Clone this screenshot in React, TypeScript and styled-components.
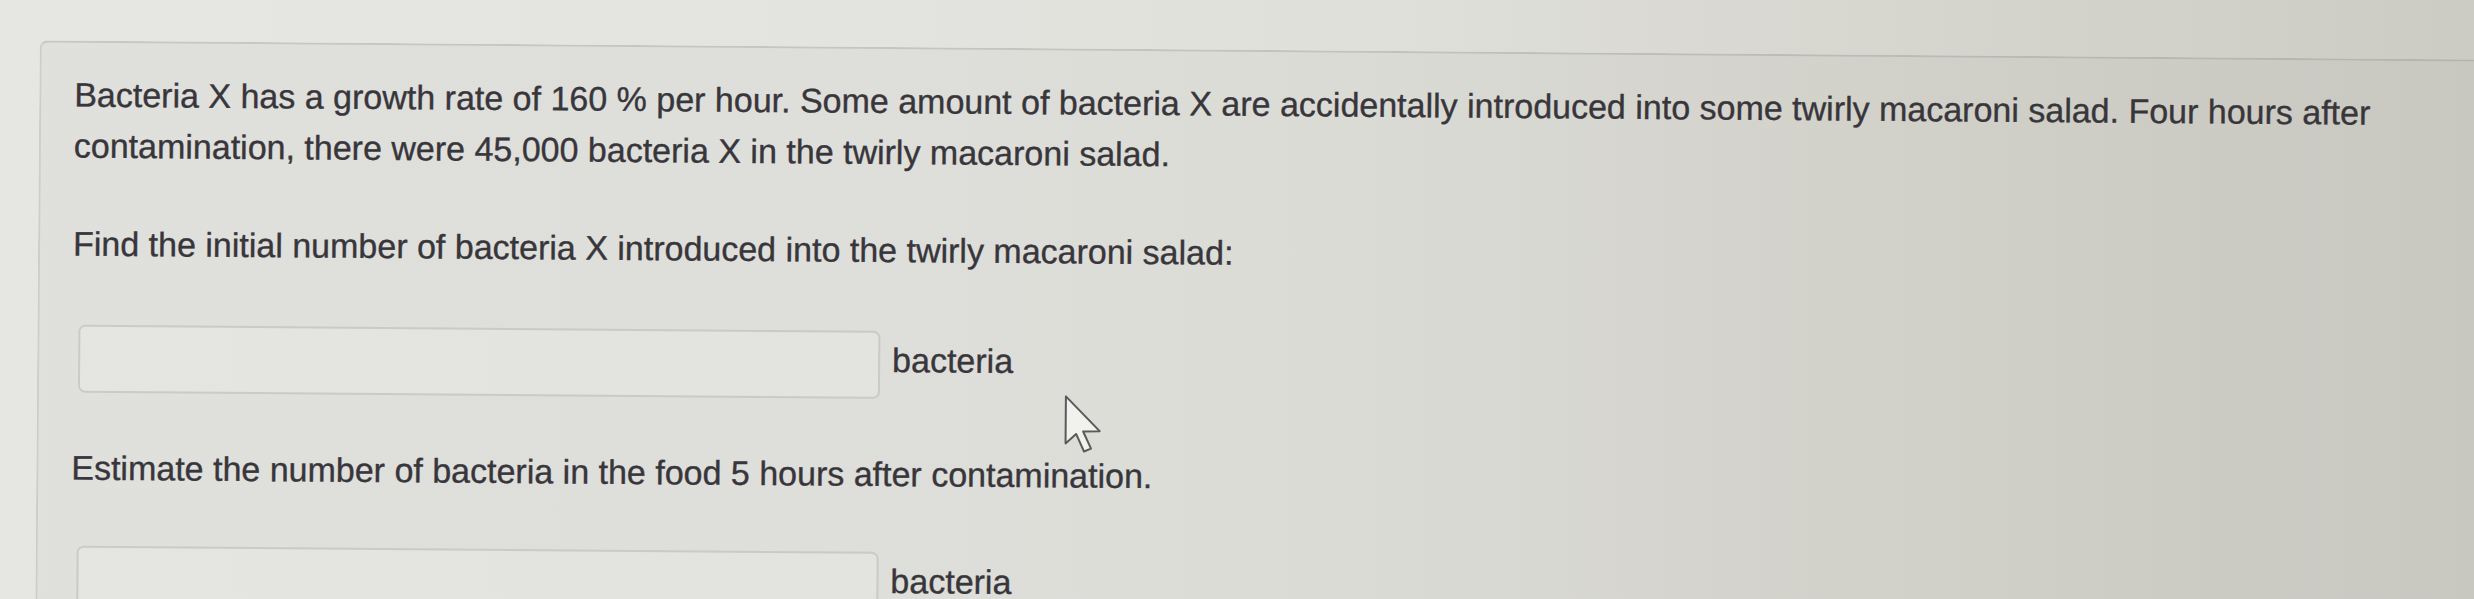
import React from 'react';
import styled, { createGlobalStyle } from 'styled-components';

const GlobalStyle = createGlobalStyle`
  html,
  body {
    margin: 0;
    padding: 0;
  }

  body {
    overflow: hidden;
    font-family: 'Liberation Sans', Arial, sans-serif;
    background: linear-gradient(
      to right,
      #e6e6e2 0%,
      #e3e3df 35%,
      #e0e0db 55%,
      #d7d6cf 75%,
      #cdccc4 100%
    );
  }
`;

// the photo is taken a little askew, so the whole sheet leans slightly
const Page = styled.div`
  position: relative;
  padding: 40px 0 0 40px;
  min-height: 700px;
  transform: rotate(0.45deg);
  transform-origin: 0 0;
`;

const Panel = styled.section`
  width: 2520px;
  box-sizing: border-box;
  padding: 27px 0 40px 33px;
  border-top: 2px solid rgba(110, 110, 104, 0.22);
  border-left: 2px solid rgba(110, 110, 104, 0.16);
  border-top-left-radius: 8px;
  background: rgba(90, 90, 80, 0.035);
`;

const Question = styled.div`
  max-width: 2360px;
`;

const Text = styled.p`
  margin: 0 0 47px;
  font-size: 34px;
  line-height: 51px;
  color: #38363b;
  -webkit-text-stroke: 0.35px #38363b;
`;

const AnswerRow = styled.div<{ top: number }>`
  display: flex;
  align-items: center;
  gap: 12px;
  margin: ${({ top }) => top}px 0 50px 6px;
`;

const AnswerBox = styled.input`
  width: 802px;
  height: 68px;
  box-sizing: border-box;
  border: 2px solid rgba(100, 100, 95, 0.2);
  border-radius: 7px;
  background: rgba(255, 255, 255, 0.16);
  outline: none;
  font-family: inherit;
  font-size: 30px;
`;

const Unit = styled.span`
  margin-bottom: 9px;
  font-size: 34px;
  line-height: 51px;
  color: #38363b;
  -webkit-text-stroke: 0.35px #38363b;
`;

const Pointer = styled.svg`
  position: absolute;
  left: 1067px;
  top: 386px;
  width: 40px;
  height: 60px;
`;

const App: React.FC = () => {
  return (
    <>
      <GlobalStyle />
      <Page>
        <Panel>
          <Question>
            <Text>
              Bacteria X has a growth rate of 160 % per hour. Some amount of bacteria X are accidentally
              introduced into some twirly macaroni salad. Four hours after contamination, there were 45,000
              bacteria X in the twirly macaroni salad.
            </Text>
            <Text>Find the initial number of bacteria X introduced into the twirly macaroni salad:</Text>
            <AnswerRow top={55}>
              <AnswerBox type="text" aria-label="initial number of bacteria" />
              <Unit>bacteria</Unit>
            </AnswerRow>
            <Text>Estimate the number of bacteria in the food 5 hours after contamination.</Text>
            <AnswerRow top={52}>
              <AnswerBox type="text" aria-label="bacteria after 5 hours" />
              <Unit>bacteria</Unit>
            </AnswerRow>
          </Question>
        </Panel>
        <Pointer viewBox="0 0 40 60">
          <path
            d="M2 2 L2 49 L12.5 39.5 L20.5 57 L27.5 54 L19.5 37 L36 36.5 Z"
            fill="#f1f1ee"
            stroke="#5a595c"
            strokeWidth="2"
            strokeLinejoin="round"
          />
        </Pointer>
      </Page>
    </>
  );
};

export default App;
